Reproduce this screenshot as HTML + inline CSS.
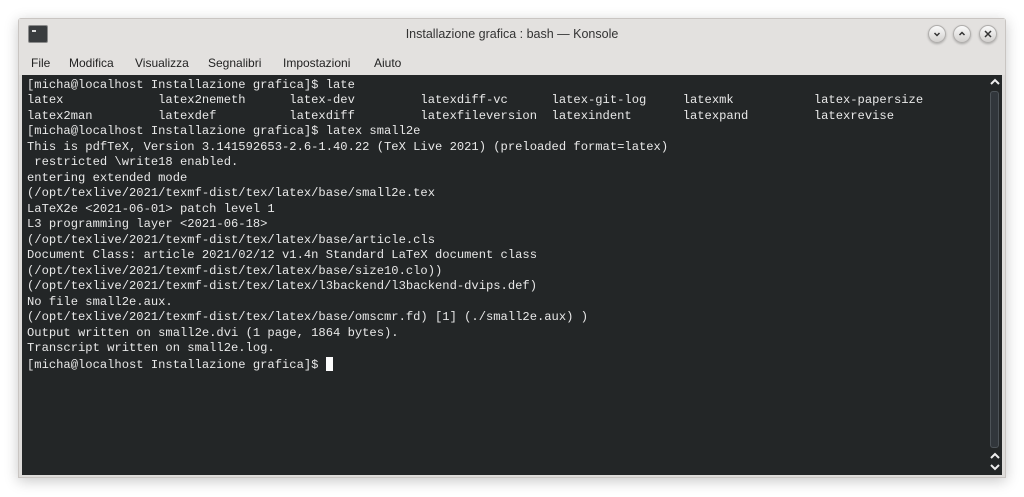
<!DOCTYPE html>
<html><head><meta charset="utf-8"><style>
*{margin:0;padding:0;box-sizing:border-box}
body{width:1024px;height:497px;background:#fff;position:relative;overflow:hidden;font-family:"Liberation Sans","DejaVu Sans",sans-serif}
.win{position:absolute;left:18px;top:18px;width:988px;height:460px;background:#dedcda;border:1px solid #c9c5c2;box-shadow:0 3px 14px rgba(0,0,0,.22);border-radius:3px 3px 0 0}
.title{position:absolute;left:0;top:0;width:100%;height:32px;background:#e3e1df;font-size:12.5px;color:#333;text-align:center;line-height:30px}
.ico{position:absolute;left:9px;top:6px;width:20px;height:18px;background:#3a3d3f;border:1px solid #8a8a8a;border-radius:2px}
.ico:after{content:"";position:absolute;left:3px;top:4px;width:4px;height:2px;background:#ddd}
.btn{position:absolute;top:6px;width:18px;height:18px;border-radius:50%;background:linear-gradient(#fafafa,#d2d0ce);border:1px solid #b0aeac;box-shadow:0 1px 2px rgba(0,0,0,.25)}
.btn svg{position:absolute;left:3px;top:3px}
.menu{position:absolute;left:0;top:32px;height:24px;width:100%;background:#e3e1df;font-size:12px;color:#222;line-height:24px}
.menu span{position:absolute}
.term{position:absolute;left:3px;top:56px;width:980px;height:400px;background:#232627}
pre{position:absolute;left:5px;top:3px;font-family:"Liberation Mono","DejaVu Sans Mono",monospace;font-size:12.15px;line-height:15.48px;color:#e8e8e8}
.cur{display:inline-block;width:7px;height:14px;background:#fcfcfc;vertical-align:-3px}
.sb{position:absolute;left:968px;top:16px;width:9px;height:357px;background:#31363b;border:1px solid #4d5358;border-radius:3px}
.arr{position:absolute;left:967px}
</style></head><body>
<div class="win">
<div class="title"><div class="ico"></div>Installazione grafica : bash — Konsole
<div class="btn" style="left:909px"><svg width="10" height="10"><path d="M2.5 4 L5 6.5 L7.5 4" stroke="#333" stroke-width="1.5" fill="none"/></svg></div>
<div class="btn" style="left:934px"><svg width="10" height="10"><path d="M2.5 6 L5 3.5 L7.5 6" stroke="#333" stroke-width="1.5" fill="none"/></svg></div>
<div class="btn" style="left:960px"><svg width="10" height="10"><path d="M2 2 L8 8 M8 2 L2 8" stroke="#333" stroke-width="1.5" fill="none"/></svg></div>
</div>
<div class="menu"><span style="left:12px">File</span><span style="left:50px">Modifica</span><span style="left:116px">Visualizza</span><span style="left:189px">Segnalibri</span><span style="left:264px">Impostazioni</span><span style="left:355px">Aiuto</span></div>
<div class="term">
<pre>[micha@localhost Installazione grafica]$ late
latex             latex2nemeth      latex-dev         latexdiff-vc      latex-git-log     latexmk           latex-papersize
latex2man         latexdef          latexdiff         latexfileversion  latexindent       latexpand         latexrevise
[micha@localhost Installazione grafica]$ latex small2e
This is pdfTeX, Version 3.141592653-2.6-1.40.22 (TeX Live 2021) (preloaded format=latex)
 restricted \write18 enabled.
entering extended mode
(/opt/texlive/2021/texmf-dist/tex/latex/base/small2e.tex
LaTeX2e &lt;2021-06-01&gt; patch level 1
L3 programming layer &lt;2021-06-18&gt;
(/opt/texlive/2021/texmf-dist/tex/latex/base/article.cls
Document Class: article 2021/02/12 v1.4n Standard LaTeX document class
(/opt/texlive/2021/texmf-dist/tex/latex/base/size10.clo))
(/opt/texlive/2021/texmf-dist/tex/latex/l3backend/l3backend-dvips.def)
No file small2e.aux.
(/opt/texlive/2021/texmf-dist/tex/latex/base/omscmr.fd) [1] (./small2e.aux) )
Output written on small2e.dvi (1 page, 1864 bytes).
Transcript written on small2e.log.
[micha@localhost Installazione grafica]$ <span class="cur"></span></pre>
<svg class="arr" style="top:3px" width="12" height="8"><path d="M2 6 L6 2 L10 6" stroke="#eee" stroke-width="2" fill="none"/></svg>
<div class="sb"></div>
<svg class="arr" style="top:377px" width="12" height="8"><path d="M2 6 L6 2 L10 6" stroke="#eee" stroke-width="2" fill="none"/></svg>
<svg class="arr" style="top:388px" width="12" height="8"><path d="M2 2 L6 6 L10 2" stroke="#eee" stroke-width="2" fill="none"/></svg>
</div>
</div>
</body></html>
